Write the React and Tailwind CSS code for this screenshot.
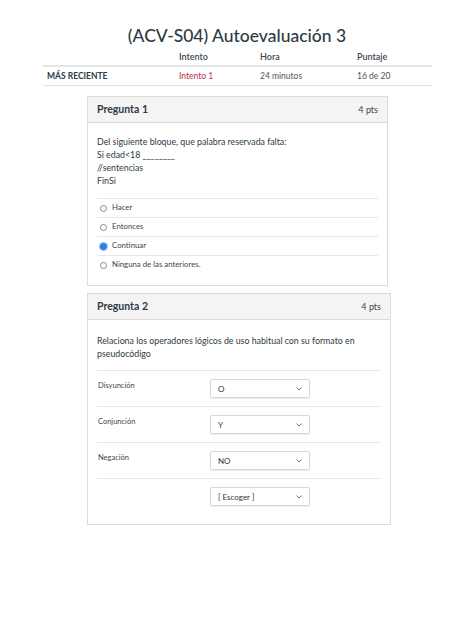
import React from "react";

const font = { fontFamily: "Lato, 'Noto Sans', sans-serif" };

function Radio({ checked }) {
  return checked ? (
    <span className="w-[7px] h-[7px] rounded-full bg-[#2b7de9] border border-[#2b7de9] shadow-[0_0_0_1px_#9cc2f5] inline-block" />
  ) : (
    <span className="w-[7px] h-[7px] rounded-full border border-[#8a8a8a] bg-white inline-block" />
  );
}

function Select({ value }) {
  return (
    <div className="w-[100px] h-[19px] border border-[#d8d8d8] rounded-[2px] bg-white shadow-[0_1px_1px_rgba(0,0,0,0.08)] flex items-center justify-between px-[7px] text-[8px] text-[#333]">
      <span>{value}</span>
      <svg width="6" height="4" viewBox="0 0 6 4" className="text-[#666]">
        <path d="M0.5 0.5 L3 3 L5.5 0.5" fill="none" stroke="currentColor" strokeWidth="0.9" />
      </svg>
    </div>
  );
}

export default function App() {
  const options = [
    { t: "Hacer" },
    { t: "Entonces" },
    { t: "Continuar", c: true },
    { t: "Ninguna de las anteriores." },
  ];
  const rows = [
    ["Disyunción", "O"],
    ["Conjunción", "Y"],
    ["Negación", "NO"],
    ["", "[ Escoger ]"],
  ];
  return (
    <div style={font} className="w-[474px] h-[632px] bg-white text-[#2d3b45] overflow-hidden">
      <h1 className="text-center text-[17.5px] font-medium text-[#2d3b45] pt-[23px] leading-[26px]">
        (ACV-S04) Autoevaluación 3
      </h1>
      <div className="ml-[43px] w-[389px]">
        <div className="flex h-[18px] items-center border-b-2 border-[#e4e6e8] text-[9px] font-semibold text-[#3b4a55]">
          <div className="w-[136px]" />
          <div className="w-[81px]">Intento</div>
          <div className="w-[97px]">Hora</div>
          <div>Puntaje</div>
        </div>
        <div className="flex h-[19px] items-center border-b border-[#dfe1e3] text-[8.5px]">
          <div className="w-[136px] pl-[4px] font-bold text-[#2d3b45]">MÁS RECIENTE</div>
          <div className="w-[81px] text-[#b8324a]">Intento 1</div>
          <div className="w-[97px] text-[#4a5660]">24 minutos</div>
          <div className="text-[#4a5660]">16 de 20</div>
        </div>
      </div>

      <div className="ml-[87px] w-[301px] mt-[10px] border border-[#dcdcdc]">
        <div className="h-[26px] bg-[#f4f4f4] border-b border-[#dcdcdc] flex items-center justify-between px-[9px]">
          <span className="text-[10.5px] font-bold text-[#2d3b45]">Pregunta 1</span>
          <span className="text-[9px] text-[#444]">4 pts</span>
        </div>
        <div className="px-[9px] pt-[12px] pb-[11px]">
          <div className="text-[8.8px] leading-[13px] text-[#2d3b45]">
            <div>Del siguiente bloque, que palabra reservada falta:</div>
            <div>Si edad&lt;18 ________</div>
            <div>//sentencias</div>
            <div>FinSi</div>
          </div>
          <div className="mt-[11px]">
            {options.map((o) => (
              <div key={o.t} className="h-[19px] border-t border-[#e8e8e8] flex items-center gap-[5px] pl-[3px] text-[7.8px] text-[#444]">
                <Radio checked={o.c} />
                <span>{o.t}</span>
              </div>
            ))}
          </div>
        </div>
      </div>

      <div className="ml-[87px] w-[304px] mt-[7px] border border-[#dcdcdc]">
        <div className="h-[26px] bg-[#f4f4f4] border-b border-[#dcdcdc] flex items-center justify-between px-[9px]">
          <span className="text-[10.5px] font-bold text-[#2d3b45]">Pregunta 2</span>
          <span className="text-[9px] text-[#444]">4 pts</span>
        </div>
        <div className="px-[9px] pt-[14px] pb-[10px]">
          <div className="text-[8.8px] leading-[13px] text-[#2d3b45]">
            Relaciona los operadores lógicos de uso habitual con su formato en pseudocódigo
          </div>
          <div className="mt-[10px]">
            {rows.map(([l, v]) => (
              <div key={v} className="h-[36px] border-t border-[#e8e8e8] flex pt-[8px]">
                <div className="w-[113px] text-[7.5px] text-[#444] pl-[1px] pt-[1px]">{l}</div>
                <Select value={v} />
              </div>
            ))}
          </div>
        </div>
      </div>
    </div>
  );
}
